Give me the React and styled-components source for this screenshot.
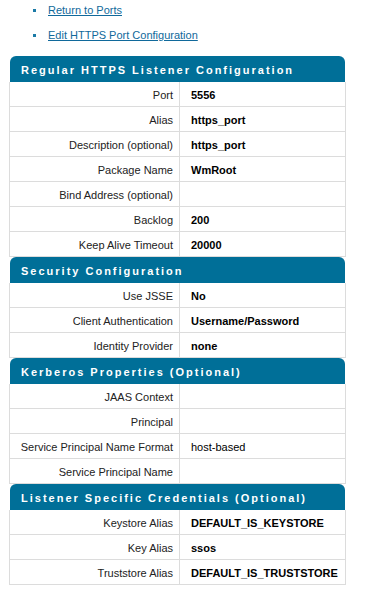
import styled, { createGlobalStyle } from "styled-components";

const Global = createGlobalStyle`
body {
  margin: 0;
  background: #fff;
  font-family: "Liberation Sans", Arial, sans-serif;
  font-size: 11px;
}
`;

const Nav = styled.ul`
  list-style: none;
  margin: 0;
  padding: 0 0 0 48px;
  display: flex;
  flex-direction: column;
  gap: 5px;
`;

const NavItem = styled.li`
  position: relative;
  height: 20px;
  line-height: 21px;
  &::before {
    content: "";
    position: absolute;
    left: -15px;
    top: 9px;
    width: 3px;
    height: 3px;
    background: #1b7aa6;
  }
`;

const Link = styled.a`
  color: #10699b;
  text-decoration: underline;
`;

const Table = styled.div`
  margin: 11px 0 0 9px;
  width: 337px;
  display: flex;
  flex-direction: column;
`;

const Header = styled.div`
  height: 26px;
  margin: 0 1px;
  padding-left: 11px;
  background: #006f98;
  border-radius: 6px 6px 0 0;
  color: #fff;
  font-weight: bold;
  font-size: 11px;
  letter-spacing: 2px;
  line-height: 28px;
`;

const Row = styled.div`
  display: grid;
  grid-template-columns: 170px 1fr;
  height: 24px;
  border: 1px solid #dcdcdc;
  border-top: none;
`;

const Label = styled.div`
  text-align: right;
  padding-right: 6px;
  border-right: 1px solid #dcdcdc;
  color: #222;
  line-height: 26px;
`;

const Value = styled.div`
  padding-left: 11px;
  line-height: 26px;
  color: #000;
  font-weight: ${(p) => (p.$plain ? "normal" : "bold")};
`;

const sections = [
  {
    title: "Regular HTTPS Listener Configuration",
    rows: [
      ["Port", "5556"],
      ["Alias", "https_port"],
      ["Description (optional)", "https_port"],
      ["Package Name", "WmRoot"],
      ["Bind Address (optional)", ""],
      ["Backlog", "200"],
      ["Keep Alive Timeout", "20000"],
    ],
  },
  {
    title: "Security Configuration",
    rows: [
      ["Use JSSE", "No"],
      ["Client Authentication", "Username/Password"],
      ["Identity Provider", "none"],
    ],
  },
  {
    title: "Kerberos Properties (Optional)",
    rows: [
      ["JAAS Context", ""],
      ["Principal", ""],
      ["Service Principal Name Format", "host-based", true],
      ["Service Principal Name", ""],
    ],
  },
  {
    title: "Listener Specific Credentials (Optional)",
    rows: [
      ["Keystore Alias", "DEFAULT_IS_KEYSTORE"],
      ["Key Alias", "ssos"],
      ["Truststore Alias", "DEFAULT_IS_TRUSTSTORE"],
    ],
  },
];

export default function App() {
  return (
    <>
      <Global />
      <Nav>
        <NavItem>
          <Link href="#">Return to Ports</Link>
        </NavItem>
        <NavItem>
          <Link href="#">Edit HTTPS Port Configuration</Link>
        </NavItem>
      </Nav>
      <Table>
        {sections.map((s) => (
          <div key={s.title}>
            <Header>{s.title}</Header>
            {s.rows.map(([label, value, plain]) => (
              <Row key={label}>
                <Label>{label}</Label>
                <Value $plain={plain}>{value}</Value>
              </Row>
            ))}
          </div>
        ))}
      </Table>
    </>
  );
}
